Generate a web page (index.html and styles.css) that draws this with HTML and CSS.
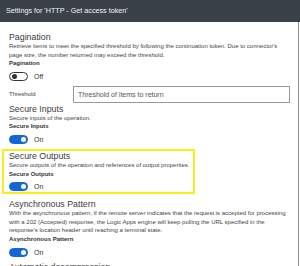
FILE: index.html
```html
<!DOCTYPE html>
<html lang="en">
<head>
    <meta charset="UTF-8">
    <meta name="viewport" content="width=device-width, initial-scale=1.0">
    <title>Settings</title>
    <link rel="stylesheet" href="styles.css">
</head>
<body>
    <div class="header">Settings for 'HTTP - Get access token'</div>

    <div class="panel">
        <!-- Pagination -->
        <div class="setting">
            <div class="setting-title">Pagination</div>
            <div class="setting-desc">Retrieve items to meet the specified threshold by following the continuation token. Due to connector's<br>page size, the number returned may exceed the threshold.</div>
            <div class="setting-label">Pagination</div>
            <div class="toggle-row">
                <span class="toggle"></span>
                <span class="toggle-text">Off</span>
            </div>
            <div class="field-row">
                <span class="field-label">Threshold</span>
                <div class="field-input">Threshold of items to return</div>
            </div>
        </div>

        <!-- Secure Inputs -->
        <div class="setting">
            <div class="setting-title">Secure Inputs</div>
            <div class="setting-desc">Secure inputs of the operation.</div>
            <div class="setting-label">Secure Inputs</div>
            <div class="toggle-row">
                <span class="toggle on"></span>
                <span class="toggle-text">On</span>
            </div>
        </div>

        <!-- Secure Outputs (highlighted) -->
        <div class="setting highlight">
            <div class="setting-title">Secure Outputs</div>
            <div class="setting-desc">Secure outputs of the operation and references of output properties.</div>
            <div class="setting-label">Secure Outputs</div>
            <div class="toggle-row">
                <span class="toggle on"></span>
                <span class="toggle-text">On</span>
            </div>
        </div>

        <!-- Asynchronous Pattern -->
        <div class="setting">
            <div class="setting-title">Asynchronous Pattern</div>
            <div class="setting-desc">With the asynchronous pattern, if the remote server indicates that the request is accepted for processing<br>with a 202 (Accepted) response, the Logic Apps engine will keep polling the URL specified in the<br>response's location header until reaching a terminal state.</div>
            <div class="setting-label">Asynchronous Pattern</div>
            <div class="toggle-row">
                <span class="toggle on"></span>
                <span class="toggle-text">On</span>
            </div>
        </div>

        <div class="setting last">
            <div class="setting-title">Automatic decompression</div>
        </div>
    </div>
</body>
</html>
```

FILE: styles.css
```css
body {
    margin: 0;
    font-family: "Liberation Sans", Arial, sans-serif;
    color: #333;
    background: #fff;
    overflow: hidden;
}

.header {
    height: 22px;
    line-height: 22px;
    padding-left: 6px;
    background-color: #3b4149;
    color: #f4f4f4;
    font-size: 7.2px;
}

.panel {
    margin-right: 1px;
    border-right: 1px solid #8a8a8a;
    padding: 10px 0 0 0;
    height: 300px;
}

.setting {
    padding-left: 9px;
}

.setting-title {
    font-size: 8.8px;
    line-height: 10px;
    color: #3c3c3c;
}

.setting-desc {
    font-size: 6px;
    line-height: 8.6px;
    color: #444;
    white-space: nowrap;
}

.setting-label {
    font-size: 6px;
    line-height: 8.6px;
    font-weight: bold;
    color: #333;
}

.toggle-row {
    display: flex;
    align-items: center;
    gap: 6px;
    margin-top: 4px;
    height: 9px;
}

.toggle {
    position: relative;
    width: 17px;
    height: 7px;
    border: 1px solid #333;
    border-radius: 5px;
    background: #fff;
}

.toggle::after {
    content: "";
    position: absolute;
    top: 1px;
    left: 1.5px;
    width: 5px;
    height: 5px;
    border-radius: 50%;
    background: #333;
}

.toggle.on {
    border-color: #1266d6;
    background: #1266d6;
}

.toggle.on::after {
    left: auto;
    right: 1.5px;
    background: #fff;
}

.toggle-text {
    font-size: 7px;
    color: #333;
}

.field-row {
    display: flex;
    align-items: center;
    margin-top: 5px;
    margin-right: 8px;
}

.field-label {
    width: 64px;
    font-size: 6px;
    color: #444;
}

.field-input {
    flex: 1;
    height: 15px;
    line-height: 15px;
    border: 1px solid #999;
    padding-left: 4px;
    font-size: 7px;
    color: #555;
}

.setting + .setting {
    margin-top: 1px;
}

.highlight {
    width: 184px;
    margin-left: 2px;
    margin-top: 5px !important;
    padding-left: 5px;
    padding-top: 0;
    padding-bottom: 1px;
    border: 2px solid #f7ef1c;
}

.highlight + .setting {
    margin-top: 5px;
}

.setting.last {
    margin-top: 5px;
}
```
